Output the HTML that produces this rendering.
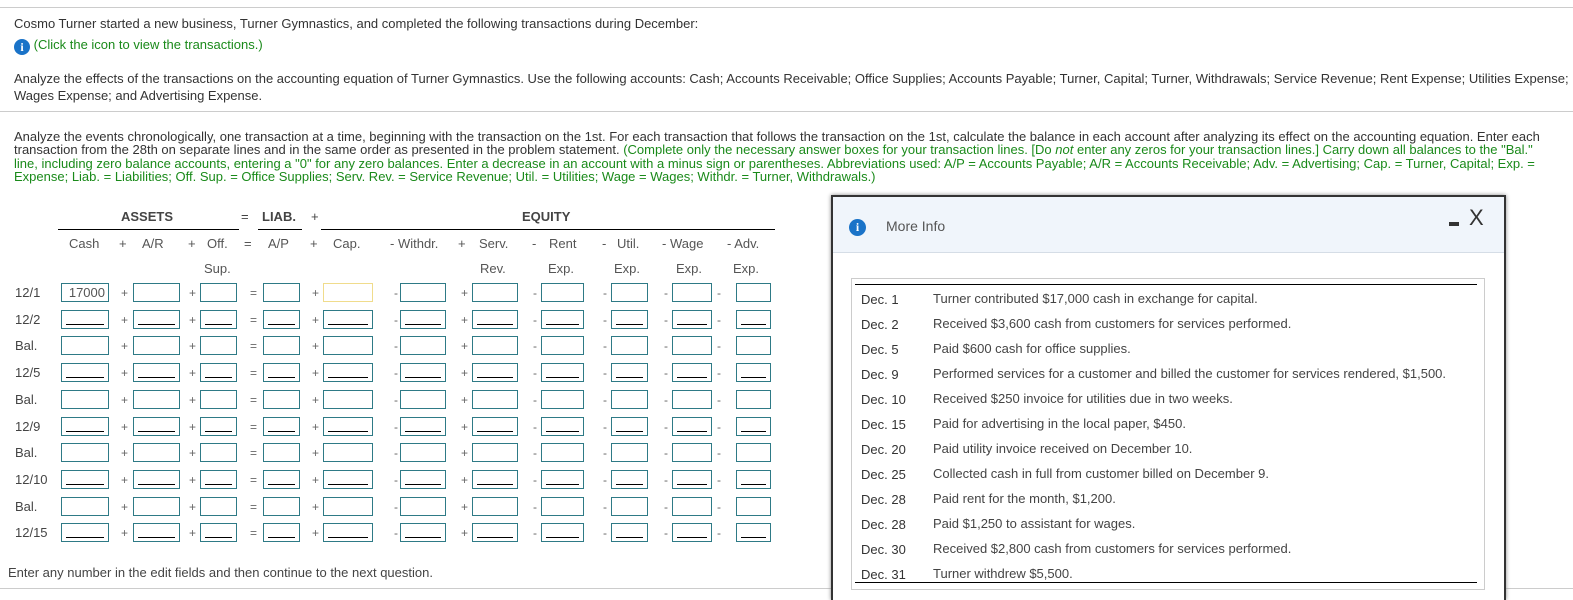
<!DOCTYPE html>
<html><head><meta charset="utf-8"><style>
body{margin:0;width:1573px;height:594px;background:#fff;font-family:"Liberation Sans",Arial,sans-serif;font-size:13px;color:#333;position:relative;overflow:hidden}
.a{position:absolute;white-space:nowrap}
.g{color:#1a8a1a}
.hl{position:absolute;height:1px;background:#ccc}
.box{position:absolute;height:19px;border:1px solid #2e7a86;background:#fff;box-sizing:border-box}
.box.u::after{content:"";position:absolute;left:4px;right:4px;bottom:3px;height:1px;background:#000}
.op{position:absolute;font-size:12px;color:#666}
.lbl{position:absolute;font-size:13px;color:#444}
.info{display:inline-block;width:16px;height:16px;border-radius:50%;background:#1a73c8;color:#fff;font-weight:bold;font-size:12px;text-align:center;line-height:16px;font-family:"Liberation Serif",serif;vertical-align:-2px}
</style></head><body>
<div class="hl" style="left:0;right:0;top:7px"></div>
<div class="a" style="left:14px;top:16px">Cosmo Turner started a new business, Turner Gymnastics, and completed the following transactions during December:</div>
<div class="a" style="left:14px;top:37px"><span class="info">i</span> <span class="g">(Click the icon to view the transactions.)</span></div>
<div class="a" style="left:14px;top:71px">Analyze the effects of the transactions on the accounting equation of Turner Gymnastics. Use the following accounts: Cash; Accounts Receivable; Office Supplies; Accounts Payable; Turner, Capital; Turner, Withdrawals; Service Revenue; Rent Expense; Utilities Expense;</div>
<div class="a" style="left:14px;top:88px">Wages Expense; and Advertising Expense.</div>
<div class="hl" style="left:0;right:0;top:111px"></div>
<div class="a" style="left:14px;top:130px;line-height:13.3px;white-space:normal;width:1540px">Analyze the events chronologically, one transaction at a time, beginning with the transaction on the 1st. For each transaction that follows the transaction on the 1st, calculate the balance in each account after analyzing its effect on the accounting equation. Enter each transaction from the 28th on separate lines and in the same order as presented in the problem statement. <span class="g">(Complete only the necessary answer boxes for your transaction lines. [Do <i>not</i> enter any zeros for your transaction lines.] Carry down all balances to the "Bal." line, including zero balance accounts, entering a "0" for any zero balances. Enter a decrease in an account with a minus sign or parentheses. Abbreviations used: A/P = Accounts Payable; A/R = Accounts Receivable; Adv. = Advertising; Cap. = Turner, Capital; Exp. = Expense; Liab. = Liabilities; Off. Sup. = Office Supplies; Serv. Rev. = Service Revenue; Util. = Utilities; Wage = Wages; Withdr. = Turner, Withdrawals.)</span></div>

<div class="a" style="left:121px;top:209px;font-weight:bold;color:#444">ASSETS</div>
<div style="position:absolute;left:58px;width:181px;top:229px;height:1px;background:#000"></div>
<div class="a" style="left:241px;top:209px;color:#444">=</div>
<div class="a" style="left:262px;top:209px;font-weight:bold;color:#444">LIAB.</div>
<div style="position:absolute;left:258px;width:44px;top:229px;height:1px;background:#000"></div>
<div class="a" style="left:311px;top:209px;color:#444">+</div>
<div class="a" style="left:522px;top:209px;font-weight:bold;color:#444">EQUITY</div>
<div style="position:absolute;left:321px;width:454px;top:229px;height:1px;background:#000"></div>

<div class="a" style="left:69px;top:236px;color:#555">Cash</div>
<div class="a" style="left:119px;top:236px;color:#555">+</div>
<div class="a" style="left:142px;top:236px;color:#555">A/R</div>
<div class="a" style="left:188px;top:236px;color:#555">+</div>
<div class="a" style="left:207px;top:236px;color:#555">Off.</div>
<div class="a" style="left:204px;top:261px;color:#555">Sup.</div>
<div class="a" style="left:244px;top:236px;color:#555">=</div>
<div class="a" style="left:268px;top:236px;color:#555">A/P</div>
<div class="a" style="left:310px;top:236px;color:#555">+</div>
<div class="a" style="left:333px;top:236px;color:#555">Cap.</div>
<div class="a" style="left:390px;top:236px;color:#555">- Withdr.</div>
<div class="a" style="left:458px;top:236px;color:#555">+</div>
<div class="a" style="left:479px;top:236px;color:#555">Serv.</div>
<div class="a" style="left:480px;top:261px;color:#555">Rev.</div>
<div class="a" style="left:532px;top:236px;color:#555">-</div>
<div class="a" style="left:549px;top:236px;color:#555">Rent</div>
<div class="a" style="left:548px;top:261px;color:#555">Exp.</div>
<div class="a" style="left:602px;top:236px;color:#555">-</div>
<div class="a" style="left:617px;top:236px;color:#555">Util.</div>
<div class="a" style="left:614px;top:261px;color:#555">Exp.</div>
<div class="a" style="left:662px;top:236px;color:#555">- Wage</div>
<div class="a" style="left:676px;top:261px;color:#555">Exp.</div>
<div class="a" style="left:727px;top:236px;color:#555">- Adv.</div>
<div class="a" style="left:733px;top:261px;color:#555">Exp.</div>

<div id="rows"></div>

<div class="a" style="left:8px;top:565px;font-size:13px;color:#444">Enter any number in the edit fields and then continue to the next question.</div>
<div class="hl" style="left:0;right:0;top:588px"></div>

<div style="position:absolute;left:831px;top:195px;width:675px;height:405px;border:2px solid #333;border-bottom:none;background:#fff;box-shadow:0 0 4px #888;box-sizing:border-box">
 <div style="position:absolute;left:0;right:0;top:0;height:55px;background:#f0f5fb;border-bottom:1px solid #d5dde6"></div>
 <div class="a" style="left:16px;top:20px"><span class="info" style="width:17px;height:17px;line-height:17px">i</span></div>
 <div class="a" style="left:53px;top:21px;color:#555;font-size:14px">More Info</div>
 <div style="position:absolute;left:616px;top:25px;width:10px;height:4px;background:#333"></div>
 <div class="a" style="left:636px;top:8px;font-size:22px;color:#333">X</div>
 <div style="position:absolute;left:18px;top:81px;width:632px;height:310px;border:1px solid #ccc"></div>
 <div style="position:absolute;left:22px;top:87px;width:622px;height:1px;background:#000"></div>
 <div style="position:absolute;left:22px;top:385px;width:622px;height:1px;background:#000"></div>
 <div id="tx"></div>
</div>
<script>
var xs=[[61,48],[133,47],[200,37],[263,37],[323,50],[400,46],[472,46],[541,43],[611,37],[672,40],[736,35]];
var ops=[[121,"+"],[189,"+"],[250,"="],[312,"+"],[394,"-"],[461,"+"],[533,"-"],[603,"-"],[664,"-"],[717,"-"]];
var labs=["12/1","12/2","Bal.","12/5","Bal.","12/9","Bal.","12/10","Bal.","12/15"];
var h="";
for(var r=0;r<10;r++){var y=283+r*26.7;
h+='<div class="lbl" style="left:15px;top:'+(y+2)+'px">'+labs[r]+'</div>';
for(var c=0;c<11;c++){var cls="box"+(r%2==1?" u":"");var st="left:"+xs[c][0]+"px;top:"+y+"px;width:"+xs[c][1]+"px;";
if(r==0&&c==4)st+="border-color:#f0dc8c;";
h+='<div class="'+cls+'" style="'+st+'">'+(r==0&&c==0?'<span style="position:absolute;right:3px;top:1px;color:#555;font-size:13px">17000</span>':'')+'</div>';}
for(var o=0;o<10;o++)h+='<div class="op" style="left:'+ops[o][0]+'px;top:'+(y+3)+'px">'+ops[o][1]+'</div>';}
document.getElementById("rows").innerHTML=h;
var tx=[["Dec. 1","Turner contributed $17,000 cash in exchange for capital."],["Dec. 2","Received $3,600 cash from customers for services performed."],["Dec. 5","Paid $600 cash for office supplies."],["Dec. 9","Performed services for a customer and billed the customer for services rendered, $1,500."],["Dec. 10","Received $250 invoice for utilities due in two weeks."],["Dec. 15","Paid for advertising in the local paper, $450."],["Dec. 20","Paid utility invoice received on December 10."],["Dec. 25","Collected cash in full from customer billed on December 9."],["Dec. 28","Paid rent for the month, $1,200."],["Dec. 28","Paid $1,250 to assistant for wages."],["Dec. 30","Received $2,800 cash from customers for services performed."],["Dec. 31","Turner withdrew $5,500."]];
var t="";for(var i=0;i<12;i++){var y=95+i*25;
t+='<div class="a" style="left:28px;top:'+y+'px;color:#333">'+tx[i][0]+'</div><div class="a" style="left:100px;top:'+(y-1)+'px;color:#444">'+tx[i][1]+'</div>';}
document.getElementById("tx").innerHTML=t;
</script>
</body></html>
